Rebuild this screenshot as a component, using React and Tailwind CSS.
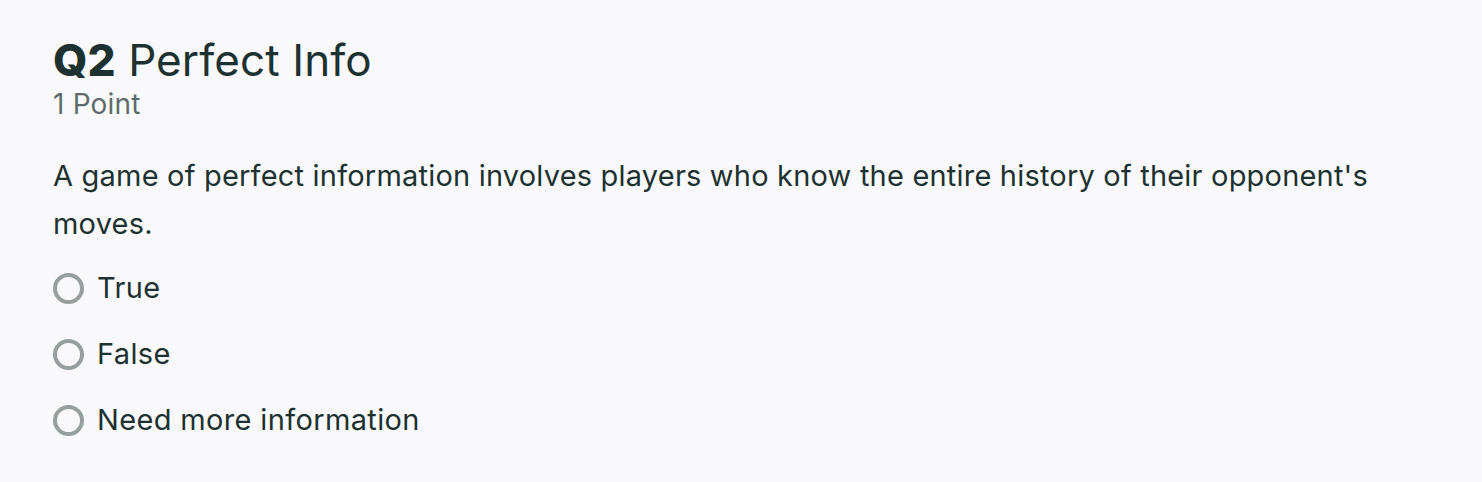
export default function App() {
  const options = ["True", "False", "Need more information"];
  return (
    <div className="min-h-screen w-full bg-[#f9f9fb] text-[#1d3230] font-['Inter','Liberation_Sans',sans-serif]">
      <div className="pl-[53px] pr-[60px] pt-[34px]">
        <h2 className="text-[44px] leading-[52px] tracking-[0.1px]">
          <span className="font-extrabold">Q2</span> Perfect Info
        </h2>
        <p className="mt-[1px] text-[28px] leading-[34px] tracking-[0.2px] text-[#5d6c6b]">1 Point</p>
        <p className="mt-[31px] text-[29px] leading-[48px] tracking-[0.2px]">
          A game of perfect information involves players who know the entire history of their opponent's moves.
        </p>
        <div className="mt-[24px] flex flex-col gap-[34px]">
          {options.map((o) => (
            <label key={o} className="flex items-center gap-[13px] text-[29px] leading-[32px] tracking-[0.35px]">
              <span className="w-[31px] h-[31px] rounded-full border-4 border-[#979f9e] bg-[#f9f9fb]" />
              {o}
            </label>
          ))}
        </div>
      </div>
    </div>
  );
}
